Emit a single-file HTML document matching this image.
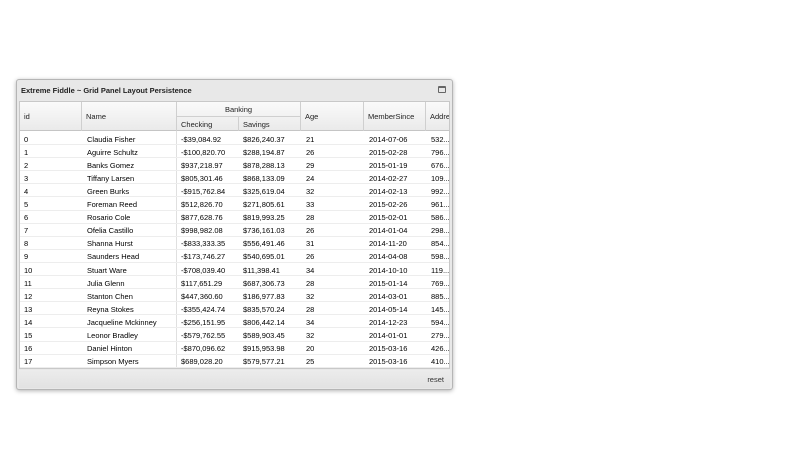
<!DOCTYPE html>
<html><head><style>
*{margin:0;padding:0;box-sizing:border-box}
body{width:800px;height:450px;background:#fff;font-family:"Liberation Sans",sans-serif;font-size:7.5px;color:#000;position:relative;overflow:hidden}
.panel{position:absolute;left:16px;top:79px;width:437px;height:311px;background:#e8e8e8;border:1px solid #b5b5b5;border-radius:3px;box-shadow:0 1px 4px rgba(0,0,0,.3)}
.title{position:absolute;left:4px;top:6px;font-weight:bold;font-size:7.5px;color:#222}
.tool{position:absolute;left:421px;top:6px;width:8px;height:7px;border:1px solid #666;border-top-width:2px;border-radius:1px}
.grid{position:absolute;left:2px;top:21px;width:431px;height:268px;background:#fff;border:1px solid #c8c8c8;overflow:hidden}
.hd{position:absolute;top:0;height:29px;background:linear-gradient(#fafafa,#eaeaea);border-bottom:1px solid #c5c5c5;width:100%}
.h{position:absolute;border-right:1px solid #cfcfcf;padding-left:4px;display:flex;align-items:center;color:#222}
.row{position:absolute;left:0;width:100%;height:13px;border-bottom:1px solid #ededed}
.row span{position:absolute;top:2.5px}
.toolbar{position:absolute;left:2px;top:290px;width:431px;height:18px;background:linear-gradient(#ececec,#e2e2e2)}
.reset{position:absolute;right:6px;top:5px;color:#333}
.vl{position:absolute;top:29px;width:1px;height:240px;background:#e0e0e0}
</style></head><body>
<div class="panel">
<div class="title">Extreme Fiddle ~ Grid Panel Layout Persistence</div>
<div class="tool"></div>
<div class="grid">
<div class="hd">
<div class="h" style="left:0;width:62px;height:29px">id</div>
<div class="h" style="left:62px;width:95px;height:29px">Name</div>
<div class="h" style="left:157px;width:124px;height:15px;justify-content:center;border-bottom:1px solid #cfcfcf;padding-left:0">Banking</div>
<div class="h" style="left:157px;top:15px;width:62px;height:14px">Checking</div>
<div class="h" style="left:219px;top:15px;width:62px;height:14px">Savings</div>
<div class="h" style="left:281px;width:63px;height:29px">Age</div>
<div class="h" style="left:344px;width:62px;height:29px">MemberSince</div>
<div class="h" style="left:406px;width:30px;height:29px">Addres</div>
</div>
<div class="vl" style="left:156px"></div>
<div class="row" style="top:30px"><span style="left:4px">0</span><span style="left:67px">Claudia Fisher</span><span style="left:161px">-$39,084.92</span><span style="left:223px">$826,240.37</span><span style="left:286px">21</span><span style="left:349px">2014-07-06</span><span style="left:411px">532...</span></div>
<div class="row" style="top:43.1px"><span style="left:4px">1</span><span style="left:67px">Aguirre Schultz</span><span style="left:161px">-$100,820.70</span><span style="left:223px">$288,194.87</span><span style="left:286px">26</span><span style="left:349px">2015-02-28</span><span style="left:411px">796...</span></div>
<div class="row" style="top:56.2px"><span style="left:4px">2</span><span style="left:67px">Banks Gomez</span><span style="left:161px">$937,218.97</span><span style="left:223px">$878,288.13</span><span style="left:286px">29</span><span style="left:349px">2015-01-19</span><span style="left:411px">676...</span></div>
<div class="row" style="top:69.3px"><span style="left:4px">3</span><span style="left:67px">Tiffany Larsen</span><span style="left:161px">$805,301.46</span><span style="left:223px">$868,133.09</span><span style="left:286px">24</span><span style="left:349px">2014-02-27</span><span style="left:411px">109...</span></div>
<div class="row" style="top:82.4px"><span style="left:4px">4</span><span style="left:67px">Green Burks</span><span style="left:161px">-$915,762.84</span><span style="left:223px">$325,619.04</span><span style="left:286px">32</span><span style="left:349px">2014-02-13</span><span style="left:411px">992...</span></div>
<div class="row" style="top:95.5px"><span style="left:4px">5</span><span style="left:67px">Foreman Reed</span><span style="left:161px">$512,826.70</span><span style="left:223px">$271,805.61</span><span style="left:286px">33</span><span style="left:349px">2015-02-26</span><span style="left:411px">961...</span></div>
<div class="row" style="top:108.6px"><span style="left:4px">6</span><span style="left:67px">Rosario Cole</span><span style="left:161px">$877,628.76</span><span style="left:223px">$819,993.25</span><span style="left:286px">28</span><span style="left:349px">2015-02-01</span><span style="left:411px">586...</span></div>
<div class="row" style="top:121.7px"><span style="left:4px">7</span><span style="left:67px">Ofelia Castillo</span><span style="left:161px">$998,982.08</span><span style="left:223px">$736,161.03</span><span style="left:286px">26</span><span style="left:349px">2014-01-04</span><span style="left:411px">298...</span></div>
<div class="row" style="top:134.8px"><span style="left:4px">8</span><span style="left:67px">Shanna Hurst</span><span style="left:161px">-$833,333.35</span><span style="left:223px">$556,491.46</span><span style="left:286px">31</span><span style="left:349px">2014-11-20</span><span style="left:411px">854...</span></div>
<div class="row" style="top:147.9px"><span style="left:4px">9</span><span style="left:67px">Saunders Head</span><span style="left:161px">-$173,746.27</span><span style="left:223px">$540,695.01</span><span style="left:286px">26</span><span style="left:349px">2014-04-08</span><span style="left:411px">598...</span></div>
<div class="row" style="top:161px"><span style="left:4px">10</span><span style="left:67px">Stuart Ware</span><span style="left:161px">-$708,039.40</span><span style="left:223px">$11,398.41</span><span style="left:286px">34</span><span style="left:349px">2014-10-10</span><span style="left:411px">119...</span></div>
<div class="row" style="top:174.1px"><span style="left:4px">11</span><span style="left:67px">Julia Glenn</span><span style="left:161px">$117,651.29</span><span style="left:223px">$687,306.73</span><span style="left:286px">28</span><span style="left:349px">2015-01-14</span><span style="left:411px">769...</span></div>
<div class="row" style="top:187.2px"><span style="left:4px">12</span><span style="left:67px">Stanton Chen</span><span style="left:161px">$447,360.60</span><span style="left:223px">$186,977.83</span><span style="left:286px">32</span><span style="left:349px">2014-03-01</span><span style="left:411px">885...</span></div>
<div class="row" style="top:200.3px"><span style="left:4px">13</span><span style="left:67px">Reyna Stokes</span><span style="left:161px">-$355,424.74</span><span style="left:223px">$835,570.24</span><span style="left:286px">28</span><span style="left:349px">2014-05-14</span><span style="left:411px">145...</span></div>
<div class="row" style="top:213.4px"><span style="left:4px">14</span><span style="left:67px">Jacqueline Mckinney</span><span style="left:161px">-$256,151.95</span><span style="left:223px">$806,442.14</span><span style="left:286px">34</span><span style="left:349px">2014-12-23</span><span style="left:411px">594...</span></div>
<div class="row" style="top:226.5px"><span style="left:4px">15</span><span style="left:67px">Leonor Bradley</span><span style="left:161px">-$579,762.55</span><span style="left:223px">$589,903.45</span><span style="left:286px">32</span><span style="left:349px">2014-01-01</span><span style="left:411px">279...</span></div>
<div class="row" style="top:239.6px"><span style="left:4px">16</span><span style="left:67px">Daniel Hinton</span><span style="left:161px">-$870,096.62</span><span style="left:223px">$915,953.98</span><span style="left:286px">20</span><span style="left:349px">2015-03-16</span><span style="left:411px">426...</span></div>
<div class="row" style="top:252.7px"><span style="left:4px">17</span><span style="left:67px">Simpson Myers</span><span style="left:161px">$689,028.20</span><span style="left:223px">$579,577.21</span><span style="left:286px">25</span><span style="left:349px">2015-03-16</span><span style="left:411px">410...</span></div>
</div>
<div class="toolbar"><span class="reset">reset</span></div>
</div>
</body></html>
